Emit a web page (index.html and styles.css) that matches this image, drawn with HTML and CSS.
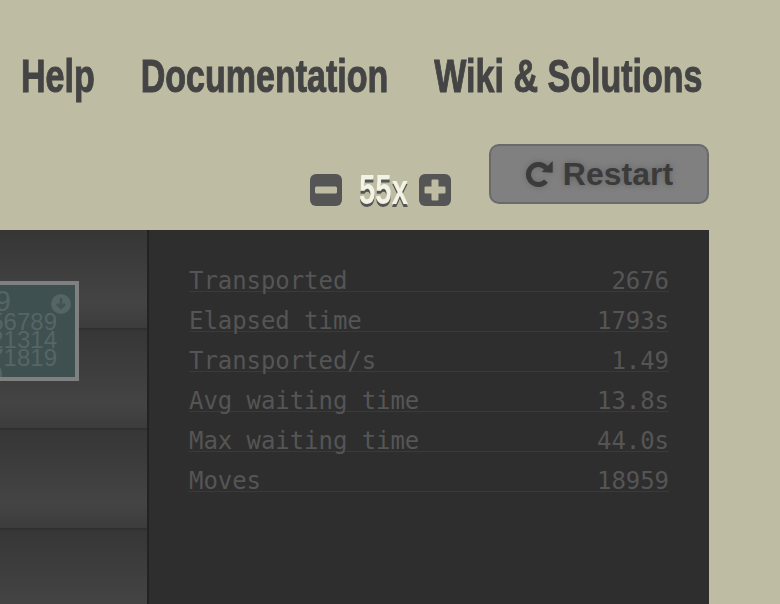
FILE: index.html
```html
<!DOCTYPE html>
<html lang="en">
<head>
  <meta charset="UTF-8">
  <title>Elevator Saga</title>
  <link rel="stylesheet" href="styles.css">
</head>
<body>
  <nav class="nav">
    <a class="nav-link">Help</a>
    <a class="nav-link">Documentation</a>
    <a class="nav-link">Wiki &amp; Solutions</a>
  </nav>
  <div class="controls">
    <div class="speed">
      <span class="speed-btn">
        <svg viewBox="0 0 32 32" width="32" height="32"><rect x="5" y="12.5" width="22" height="7" rx="1.5"/></svg>
      </span>
      <span class="speed-value"><span class="speed-text">55x</span></span>
      <span class="speed-btn">
        <svg viewBox="0 0 32 32" width="32" height="32"><path d="M12.5 6.5a1 1 0 0 1 1-1h5a1 1 0 0 1 1 1v6h6a1 1 0 0 1 1 1v5a1 1 0 0 1-1 1h-6v6a1 1 0 0 1-1 1h-5a1 1 0 0 1-1-1v-6h-6a1 1 0 0 1-1-1v-5a1 1 0 0 1 1-1h6z"/></svg>
      </span>
    </div>
    <button class="restart" type="button">
      <svg viewBox="0 0 30 30" width="30" height="30"><path d="M21 9A10 10 0 1 0 21 22.1"/><path class="fill" d="M27.7 2v11.7l-11-.7z"/></svg>
      Restart
    </button>
  </div>
  <main class="game">
    <div class="world">
      <div class="floor"></div>
      <div class="floor"></div>
      <div class="floor"></div>
      <div class="floor"></div>
      <div class="elevator">
        <span class="num num-top">9</span>
        <span class="num">56789</span>
        <span class="num">21314</span>
        <span class="num">71819</span>
        <span class="num num-bottom">0</span>
        <svg class="elevator-dir" viewBox="0 0 20 20" width="20" height="20">
          <circle cx="10" cy="10" r="10" fill="#556464"/>
          <path d="M10 4v10M6 10l4 4 4-4" fill="none" stroke="#435353" stroke-width="2.6"/>
        </svg>
      </div>
    </div>
    <div class="stats">
      <div class="stat"><span>Transported</span><span>2676</span></div>
      <div class="stat"><span>Elapsed time</span><span>1793s</span></div>
      <div class="stat"><span>Transported/s</span><span>1.49</span></div>
      <div class="stat"><span>Avg waiting time</span><span>13.8s</span></div>
      <div class="stat"><span>Max waiting time</span><span>44.0s</span></div>
      <div class="stat"><span>Moves</span><span>18959</span></div>
    </div>
  </main>
</body>
</html>
```

FILE: styles.css
```css
html, body {
  height: 100%;
}
body {
  margin: 0;
  overflow: hidden;
  background: #bebca2;
  font-family: "Liberation Sans", Arial, sans-serif;
}
/* no Oswald here, so the nav is a squeezed bold */
.nav {
  display: flex;
  gap: 62px;
  padding: 50px 0 0 21px;
  height: 94px;
  box-sizing: border-box;
  white-space: nowrap;
  transform: scaleX(0.74);
  transform-origin: 21px 0;
}
.nav-link {
  flex: none;
  font-weight: bold;
  font-size: 46px;
  line-height: 52px;
  color: #444;
  -webkit-text-stroke: 1px #444;
}
.controls {
  display: flex;
  justify-content: flex-end;
  align-items: flex-start;
  width: 709px;
  height: 136px;
  box-sizing: border-box;
  padding-top: 50px;
}
.speed {
  display: flex;
  align-items: center;
  margin: 30px 38px 0 0;
}
.speed-btn {
  width: 32px;
  height: 32px;
  background: #555;
  border-radius: 6px;
}
.speed-btn svg {
  display: block;
  fill: #bebca2;
}
.speed-value {
  width: 77px;
  padding-left: 6px;
  box-sizing: border-box;
  text-align: center;
  font-weight: bold;
  font-size: 42px;
  line-height: 32px;
  color: #f3f3e3;
  text-shadow: 0 3px 0 #555;
}
.speed-text {
  display: block;
  transform: scaleX(0.7);
}
.restart {
  display: flex;
  align-items: center;
  justify-content: center;
  gap: 8px;
  width: 220px;
  height: 60px;
  padding: 0;
  background: #808080;
  border: 2px solid #6a6a6a;
  border-radius: 10px;
  font-family: "Liberation Sans", Arial, sans-serif;
  font-weight: bold;
  font-size: 32px;
  color: #3b3b3b;
  text-shadow: 0 0 6px #5f5f5f;
}
.restart svg {
  fill: none;
  stroke: #3b3b3b;
  stroke-width: 5;
  filter: drop-shadow(0 0 3px #666);
}
.restart svg .fill {
  fill: #3b3b3b;
  stroke: none;
}
.game {
  display: flex;
  width: 709px;
  height: 374px;
  overflow: hidden;
  background: #2e2e2e;
}
.world {
  position: relative;
  flex: none;
  width: 147px;
  border-right: 2px solid #222;
  overflow: hidden;
}
.floor {
  height: 98px;
  border-bottom: 2px solid #303030;
  background: linear-gradient(#363636, #444 75%, #3c3c3c);
}
.elevator {
  position: absolute;
  top: 51px;
  right: 68px;
  width: 100px;
  height: 100px;
  box-sizing: border-box;
  border: 4px solid #808080;
  background: #3f5050;
  overflow: hidden;
  display: flex;
  flex-direction: column;
  align-items: flex-end;
  padding-right: 18px;
  font-size: 24px;
  line-height: 18px;
  color: #566565;
}
.num {
  display: block;
  white-space: nowrap;
}
.num-top {
  margin: 6px 46px 1px 0;
  font-size: 29px;
  line-height: 21px;
}
.num-bottom {
  margin-right: 54px;
  font-size: 29px;
  line-height: 17px;
}
.elevator-dir {
  position: absolute;
  top: 9px;
  right: 4px;
}
.stats {
  flex: 1;
  padding: 31px 40px;
  font-family: "DejaVu Sans Mono", monospace;
  font-size: 24px;
  letter-spacing: -0.06px;
  color: #555;
}
.stat {
  display: flex;
  justify-content: space-between;
  height: 30px;
  line-height: 41px;
  margin-bottom: 9px;
  border-bottom: 1px solid #3a3a3a;
}
```
